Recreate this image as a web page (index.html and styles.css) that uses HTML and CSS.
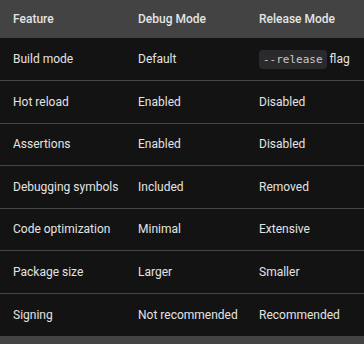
FILE: index.html
```html
<!DOCTYPE html>
<html>

<head>
    <title>Debug vs Release</title>
    <link rel="stylesheet" href="styles.css">
</head>

<body>
    <div class="table-wrap">
        <table class="compare">
            <thead>
                <tr>
                    <th>Feature</th>
                    <th>Debug Mode</th>
                    <th>Release Mode</th>
                </tr>
            </thead>
            <tbody>
                <tr>
                    <td>Build mode</td>
                    <td>Default</td>
                    <td><code>--release</code> flag</td>
                </tr>
                <tr>
                    <td>Hot reload</td>
                    <td>Enabled</td>
                    <td>Disabled</td>
                </tr>
                <tr>
                    <td>Assertions</td>
                    <td>Enabled</td>
                    <td>Disabled</td>
                </tr>
                <tr>
                    <td>Debugging symbols</td>
                    <td>Included</td>
                    <td>Removed</td>
                </tr>
                <tr>
                    <td>Code optimization</td>
                    <td>Minimal</td>
                    <td>Extensive</td>
                </tr>
                <tr>
                    <td>Package size</td>
                    <td>Larger</td>
                    <td>Smaller</td>
                </tr>
                <tr>
                    <td>Signing</td>
                    <td>Not recommended</td>
                    <td>Recommended</td>
                </tr>
            </tbody>
        </table>
    </div>
</body>

</html>
```

FILE: styles.css
```css
body {
    margin: 0;
    background-color: #434343;
    font-family: Roboto, 'Noto Sans', sans-serif;
    font-size: 12px;
    color: #e3e3e3;
}

.table-wrap {
    width: 364px;
}

.compare {
    width: 100%;
    border-collapse: collapse;
    table-layout: fixed;
}

.compare th:nth-child(1) {
    width: 126px;
}

.compare th:nth-child(2) {
    width: 121px;
}

.compare th,
.compare td {
    text-align: left;
    white-space: nowrap;
    padding: 0 0 0 13px;
    box-sizing: border-box;
}

.compare th {
    font-weight: 500;
    height: 38px;
    background-color: #434343;
}

.compare td {
    height: 42.5px;
    background-color: #131314;
    border-bottom: 1px solid #444746;
}

.compare tr td:nth-child(2),
.compare tr th:nth-child(2),
.compare tr td:nth-child(3),
.compare tr th:nth-child(3) {
    padding-left: 12px;
}

.compare tbody tr:last-child td {
    border-bottom: none;
}

code {
    font-family: 'DejaVu Sans Mono', monospace;
    font-size: 11px;
    background-color: #2a2a2d;
    color: #c8c8c8;
    padding: 3px 4px;
    border-radius: 4px;
}
```
